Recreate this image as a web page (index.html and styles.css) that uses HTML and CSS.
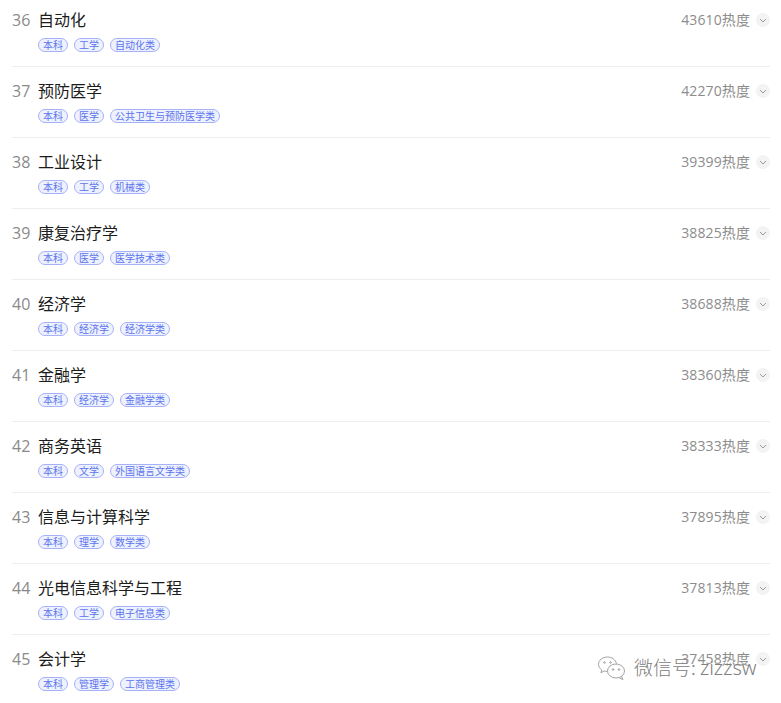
FILE: index.html
```html
<!DOCTYPE html>
<html lang="zh">
<head>
<meta charset="utf-8">
<title>专业热度</title>
<link rel="stylesheet" href="styles.css">
</head>
<body>
<main class="list">
<section class="row"><div class="rank">36</div><div class="info"><div class="name">自动化</div><div class="tags"><span class="tag">本科</span><span class="tag">工学</span><span class="tag">自动化类</span></div></div><div class="heat">43610热度</div><span class="more"><svg viewBox="0 0 8 5" class="chev"><path d="M1 1l3 3 3-3"/></svg></span></section>
<section class="row"><div class="rank">37</div><div class="info"><div class="name">预防医学</div><div class="tags"><span class="tag">本科</span><span class="tag">医学</span><span class="tag">公共卫生与预防医学类</span></div></div><div class="heat">42270热度</div><span class="more"><svg viewBox="0 0 8 5" class="chev"><path d="M1 1l3 3 3-3"/></svg></span></section>
<section class="row"><div class="rank">38</div><div class="info"><div class="name">工业设计</div><div class="tags"><span class="tag">本科</span><span class="tag">工学</span><span class="tag">机械类</span></div></div><div class="heat">39399热度</div><span class="more"><svg viewBox="0 0 8 5" class="chev"><path d="M1 1l3 3 3-3"/></svg></span></section>
<section class="row"><div class="rank">39</div><div class="info"><div class="name">康复治疗学</div><div class="tags"><span class="tag">本科</span><span class="tag">医学</span><span class="tag">医学技术类</span></div></div><div class="heat">38825热度</div><span class="more"><svg viewBox="0 0 8 5" class="chev"><path d="M1 1l3 3 3-3"/></svg></span></section>
<section class="row"><div class="rank">40</div><div class="info"><div class="name">经济学</div><div class="tags"><span class="tag">本科</span><span class="tag">经济学</span><span class="tag">经济学类</span></div></div><div class="heat">38688热度</div><span class="more"><svg viewBox="0 0 8 5" class="chev"><path d="M1 1l3 3 3-3"/></svg></span></section>
<section class="row"><div class="rank">41</div><div class="info"><div class="name">金融学</div><div class="tags"><span class="tag">本科</span><span class="tag">经济学</span><span class="tag">金融学类</span></div></div><div class="heat">38360热度</div><span class="more"><svg viewBox="0 0 8 5" class="chev"><path d="M1 1l3 3 3-3"/></svg></span></section>
<section class="row"><div class="rank">42</div><div class="info"><div class="name">商务英语</div><div class="tags"><span class="tag">本科</span><span class="tag">文学</span><span class="tag">外国语言文学类</span></div></div><div class="heat">38333热度</div><span class="more"><svg viewBox="0 0 8 5" class="chev"><path d="M1 1l3 3 3-3"/></svg></span></section>
<section class="row"><div class="rank">43</div><div class="info"><div class="name">信息与计算科学</div><div class="tags"><span class="tag">本科</span><span class="tag">理学</span><span class="tag">数学类</span></div></div><div class="heat">37895热度</div><span class="more"><svg viewBox="0 0 8 5" class="chev"><path d="M1 1l3 3 3-3"/></svg></span></section>
<section class="row"><div class="rank">44</div><div class="info"><div class="name">光电信息科学与工程</div><div class="tags"><span class="tag">本科</span><span class="tag">工学</span><span class="tag">电子信息类</span></div></div><div class="heat">37813热度</div><span class="more"><svg viewBox="0 0 8 5" class="chev"><path d="M1 1l3 3 3-3"/></svg></span></section>
<section class="row"><div class="rank">45</div><div class="info"><div class="name">会计学</div><div class="tags"><span class="tag">本科</span><span class="tag">管理学</span><span class="tag">工商管理类</span></div></div><div class="heat">37458热度</div><span class="more"><svg viewBox="0 0 8 5" class="chev"><path d="M1 1l3 3 3-3"/></svg></span></section>
</main>
<div class="watermark">
<svg class="wechat" viewBox="0 0 30 26"><path d="M10.500 2C5.500 2 1.500 5.200 1.500 9.300c0 2.300 1.300 4.300 3.300 5.700l-.9 2.700 3.200-1.700c1 .3 1.900.4 2.900.4"/><path d="M19.500 8.500C18.500 4.700 14.900 2 10.500 2"/><ellipse cx="19" cy="16" rx="8.500" ry="7"/><path d="M24.500 21.500l1.500 3-3.500-1.500"/><circle cx="7.500" cy="7.500" r=".8"/><circle cx="13.500" cy="7.500" r=".8"/><circle cx="16" cy="14.500" r=".8"/><circle cx="22" cy="14.500" r=".8"/></svg>
<span class="mark-text">微信号: <span class="mark-id">zizzsw</span></span>
</div>
</body>
</html>
```

FILE: styles.css
```css
* { box-sizing: border-box; }
html, body { margin: 0; padding: 0; height: 100%; overflow: hidden; background: #fff; }
body { font-family: "Liberation Sans", "Noto Sans CJK SC", sans-serif; position: relative; }
.list { margin-top: -4px; padding: 0 11px 0 12px; }
.row { display: flex; align-items: flex-start; height: 71px; padding-top: 14px; border-bottom: 1px solid #eeeeee; }
.rank { width: 26px; font-family: "Open Sans", sans-serif; font-size: 16px; line-height: 20px; color: #8a8a8a; }
.info { flex: 1; min-width: 0; }
.name { font-size: 16px; line-height: 20px; margin-top: -1px; color: #1c1c1c; font-family: "Noto Sans CJK SC", sans-serif; }
.tags { display: flex; gap: 6px; margin-top: 9px; }
.tag { height: 14px; padding: 0 4px; border: 1px solid #a6b1f7; border-radius: 7px; background: #eef1fe; color: #5b74ee; font-size: 10px; line-height: 12px; font-family: "Noto Sans CJK SC", sans-serif; }
.heat { font-family: "Open Sans", "Noto Sans CJK SC", sans-serif; font-size: 14px; line-height: 20px; letter-spacing: .1px; color: #8c8c8c; }
.more { width: 14px; height: 14px; margin: 3px 0 0 6px; border-radius: 50%; background: #f3f3f3; display: flex; align-items: center; justify-content: center; }
.chev { width: 8px; height: 5px; fill: none; stroke: #9a9a9a; stroke-width: 1; }
.watermark { position: absolute; left: 597px; top: 654px; display: flex; align-items: center; gap: 7px; }
.wechat { width: 30px; height: 26px; fill: none; stroke: #8a8a8a; stroke-width: .8; }
.mark-text { font-size: 19px; line-height: 26px; color: #808080; text-shadow: 0 0 2px #fff; white-space: nowrap; font-family: "Noto Sans CJK SC", sans-serif; font-weight: 300; }
.mark-id { font-family: "Noto Sans", sans-serif; font-weight: 300; font-size: 20px; }
```
